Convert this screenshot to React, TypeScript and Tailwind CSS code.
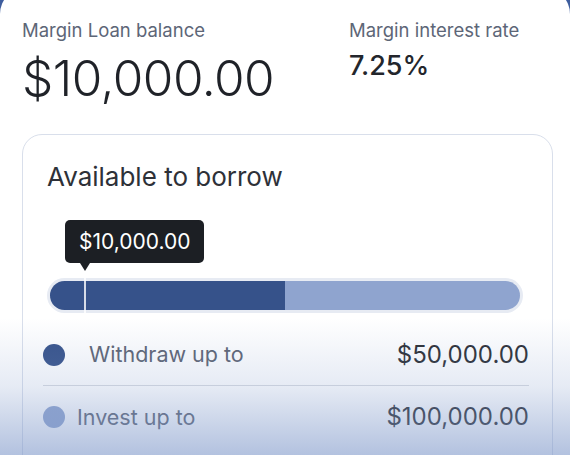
import React from 'react';

const rows = [
  { label: 'Withdraw up to', value: '$50,000.00', dot: 'bg-[#36528a]', indent: 'pl-6' },
  { label: 'Invest up to', value: '$100,000.00', dot: 'bg-[#8fa4cf]', indent: 'pl-3' },
];

export default function App() {
  return (
    <div className="h-[455px] w-[570px] overflow-hidden bg-[#3f5e9e] font-['Inter',sans-serif]">
      <div className="relative -mt-3 h-[500px] rounded-[26px] bg-white px-[22px] pt-[30px]">
        {/* Header figures */}
        <div className="flex">
          <div className="w-[327px]">
            <p className="text-[18.5px] leading-[24px] text-[#5d6677]">Margin Loan balance</p>
            <p className="mt-[6px] text-[49.5px] font-light leading-[60px] tracking-[-0.5px] text-[#1f2228]">$10,000.00</p>
          </div>
          <div>
            <p className="text-[18.5px] leading-[24px] text-[#5d6677]">Margin interest rate</p>
            <p className="mt-[9px] text-[27px] font-medium leading-[30px] text-[#23262c]">7.25%</p>
          </div>
        </div>

        {/* Available to borrow card */}
        <div className="mt-[26px] w-[531px] rounded-[20px] border border-[#d9dfeb] pb-[40px] pl-[24px] pr-[29px] pt-[25px]">
          <p className="text-[26px] leading-[34px] text-[#2e3138]">Available to borrow</p>

          <div className="mt-[26px] pl-[18px]">
            <div className="relative inline-block rounded-[5px] bg-[#1c1f24] px-[14px] py-[6px] text-[21px] leading-[31px] text-white">
              $10,000.00
              <div className="absolute -bottom-[8px] left-[15px] h-0 w-0 border-x-[5px] border-t-[8px] border-x-transparent border-t-[#1c1f24]" />
            </div>
          </div>

          <div className="relative mt-[15px] rounded-full bg-[#e7ebf3] p-[3px]">
            <div className="flex h-[29px] overflow-hidden rounded-full">
              <div className="w-[50%] bg-[#36528a]" />
              <div className="flex-1 bg-[#8fa4cf]" />
            </div>
            <div className="absolute -top-[7px] bottom-0 left-[37px] w-[2px] bg-white/80" />
          </div>

          <div className="mt-[11px]">
            {rows.map((r, i) => (
              <div
                key={r.label}
                className={`-ml-[4px] -mr-[6px] flex h-[62px] items-center ${i === 0 ? 'border-b border-[#d8dbe1]' : ''}`}
              >
                <span className={`h-[22px] w-[22px] shrink-0 rounded-full ${r.dot}`} />
                <span className={`${r.indent} text-[21.5px] text-[#5c6372]`}>{r.label}</span>
                <span className="ml-auto text-[24px] text-[#2a2d33]">{r.value}</span>
              </div>
            ))}
          </div>
        </div>

        {/* Fade overlay */}
        <div className="pointer-events-none absolute inset-x-0 top-[330px] h-[137px] bg-gradient-to-b from-[#8099ca]/0 via-[#8099ca]/20 to-[#8099ca]/60" />
      </div>
    </div>
  );
}
